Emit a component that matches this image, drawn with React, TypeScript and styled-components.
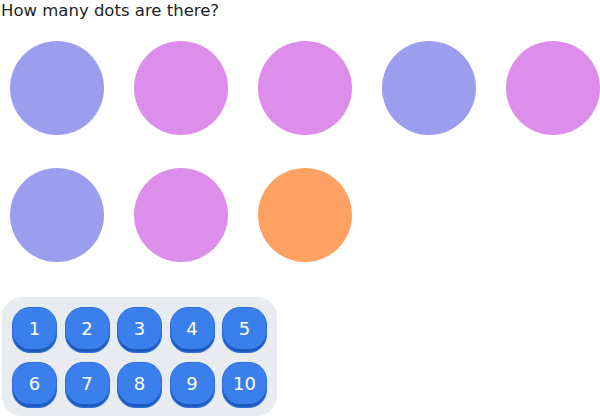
import React from 'react';
import styled, { createGlobalStyle } from 'styled-components';

const GlobalStyle = createGlobalStyle`
  html, body {
    margin: 0;
    padding: 0;
    background: #ffffff;
  }
  body {
    font-family: "DejaVu Sans", Verdana, sans-serif;
    color: #222;
  }
`;

const dots: string[] = [
  'blue',
  'pink',
  'pink',
  'blue',
  'pink',
  'blue',
  'pink',
  'orange',
];

const dotColors: Record<string, string> = {
  blue: '#9b9def',
  pink: '#dd8dea',
  orange: '#ffa162',
};

function App() {
  return (
    <Page>
      <GlobalStyle />
      <Question>How many dots are there?</Question>
      <DotGrid>
        {dots.map((color, i) => (
          <Dot key={i} $color={dotColors[color]} />
        ))}
      </DotGrid>
      <Keypad>
        {Array.from({ length: 10 }, (_, i) => (
          <Key key={i + 1}>{i + 1}</Key>
        ))}
      </Keypad>
    </Page>
  );
}

export default App;

const Page = styled.div`
  width: 600px;
  height: 419px;
  overflow: hidden;
`;

const Question = styled.div`
  font-size: 16.5px;
  line-height: 19px;
  padding: 1px 0 0 1px;
  color: #1e1e1e;
`;

const DotGrid = styled.div`
  display: grid;
  grid-template-columns: repeat(5, 94px);
  column-gap: 30px;
  row-gap: 33px;
  padding: 21px 0 0 10px;
`;

const Dot = styled.div<{ $color: string }>`
  width: 94px;
  height: 94px;
  border-radius: 50%;
  background: ${(p) => p.$color};
`;

const Keypad = styled.div`
  display: grid;
  grid-template-columns: repeat(5, 45px);
  column-gap: 7.5px;
  row-gap: 9px;
  width: fit-content;
  margin: 35px 0 0 2px;
  padding: 10px 10px 8px 10px;
  background: #e8ebef;
  border-radius: 20px;
`;

const Key = styled.div`
  box-sizing: border-box;
  width: 45px;
  height: 46px;
  display: flex;
  align-items: center;
  justify-content: center;
  padding-bottom: 3px;
  border-radius: 18px;
  background: #3b7fec;
  border: 1px solid #2e6fd9;
  box-shadow: inset 0 -3px 0 #1c5bbd;
  color: #ffffff;
  font-size: 18px;
  cursor: pointer;
`;
